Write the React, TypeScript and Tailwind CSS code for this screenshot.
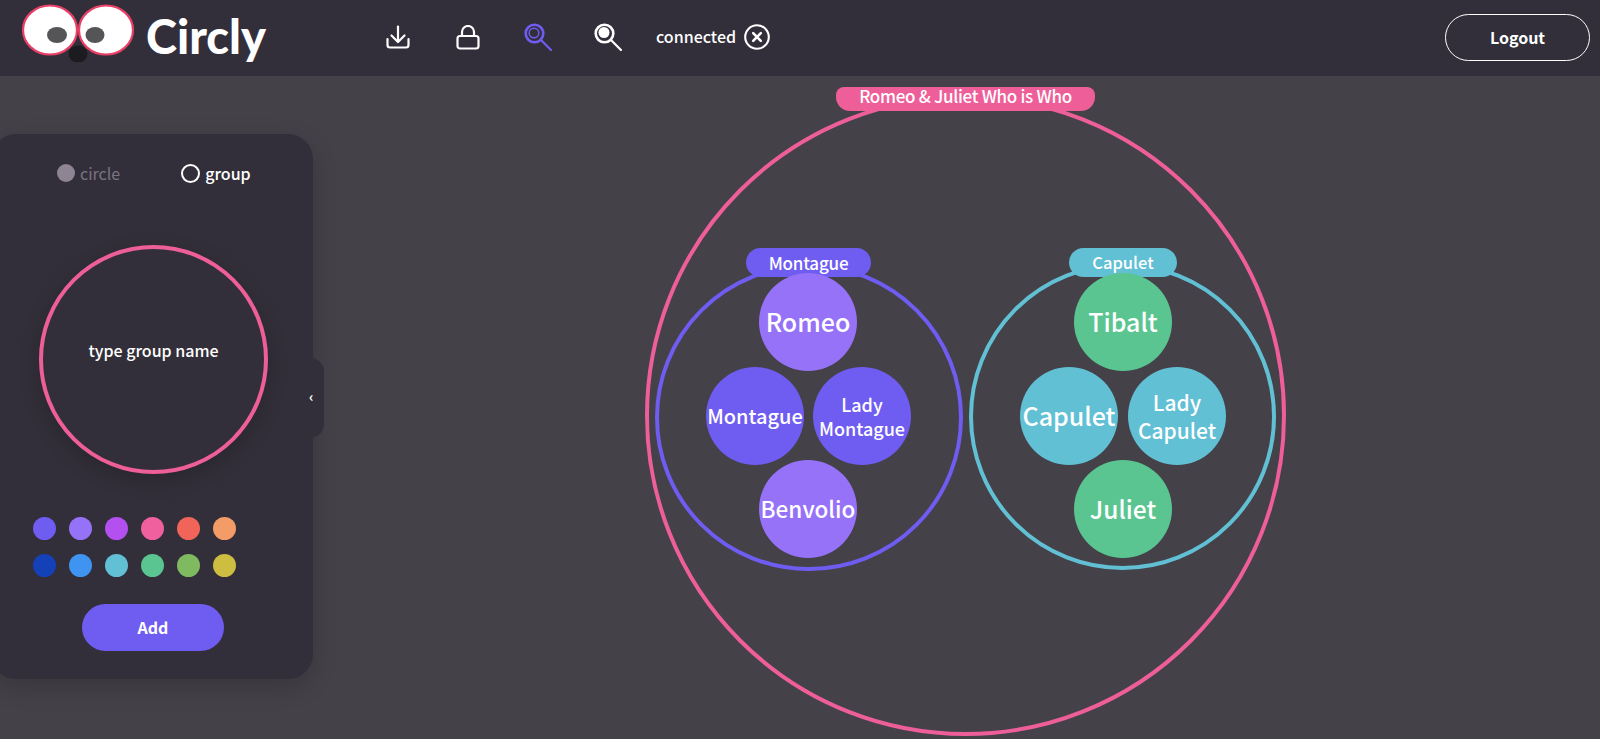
const font = "font-['Noto_Sans_CJK_JP','Noto_Sans',sans-serif]";

const swatches = [
  "bg-[#6f5cf1]", "bg-[#9672f8]", "bg-[#b44ff0]", "bg-[#f0609e]", "bg-[#f0645a]", "bg-[#f39c68]",
  "bg-[#1440b8]", "bg-[#3f94f2]", "bg-[#62c0d5]", "bg-[#5bc591]", "bg-[#7fb960]", "bg-[#cdbd40]",
];

const Logo = () => (
  <svg width="114" height="58" viewBox="0 0 114 58" className="-mt-[8px] shrink-0">
    <ellipse cx="57" cy="50" rx="9.5" ry="8.5" fill="#1b1b20" />
    <ellipse cx="29" cy="26" rx="27" ry="24.5" fill="#fff" stroke="#ea3f66" strokeWidth="2.2" />
    <ellipse cx="85" cy="26" rx="27" ry="24.5" fill="#fff" stroke="#ea3f66" strokeWidth="2.2" />
    <ellipse cx="36" cy="31" rx="10" ry="8" fill="#555457" />
    <ellipse cx="74" cy="31" rx="9.5" ry="8" fill="#555457" />
  </svg>
);

const DownloadIcon = () => (
  <svg width="24" height="24" viewBox="0 0 24 24" fill="none" stroke="#fff" strokeWidth="2.2" strokeLinecap="round" strokeLinejoin="round" className="shrink-0">
    <path d="M1.5 14v6a2.5 2.5 0 0 0 2.5 2.5h16a2.5 2.5 0 0 0 2.5-2.5v-6" />
    <path d="M12 1.5V16.5" />
    <path d="M5.5 10.5L12 17l6.5-6.5" />
  </svg>
);

const LockIcon = () => (
  <svg width="24" height="25" viewBox="0 0 24 25" fill="none" stroke="#fff" strokeWidth="2.2" strokeLinecap="round" strokeLinejoin="round" className="shrink-0">
    <rect x="1.5" y="11" width="21" height="12.5" rx="2.5" />
    <path d="M6 11V7a6 6 0 0 1 12 0v4" />
  </svg>
);

const SearchPurple = () => (
  <svg width="28" height="28" viewBox="0 0 28 28" fill="none" stroke="#6f5cf1" strokeLinecap="round" className="shrink-0">
    <circle cx="10.5" cy="10.5" r="8.8" strokeWidth="2.6" />
    <circle cx="10" cy="10" r="4.8" strokeWidth="1.5" />
    <path d="M17.5 17.5L27 27" strokeWidth="2.2" />
  </svg>
);

const SearchWhite = () => (
  <svg width="28" height="28" viewBox="0 0 28 28" fill="none" stroke="#fff" strokeLinecap="round" className="shrink-0">
    <circle cx="10.5" cy="10.5" r="8.8" strokeWidth="2.6" />
    <circle cx="10" cy="9.5" r="5.5" fill="#fff" stroke="none" />
    <path d="M17.5 17.5L27 27" strokeWidth="2.2" />
  </svg>
);

const CloseCircle = () => (
  <svg width="26" height="26" viewBox="0 0 26 26" fill="none" stroke="#fff" strokeLinecap="round" className="shrink-0">
    <circle cx="13" cy="13" r="11.8" strokeWidth="2.1" />
    <path d="M9.2 9.2l7.6 7.6M16.8 9.2l-7.6 7.6" strokeWidth="2.6" />
  </svg>
);

const Header = () => (
  <header className="flex h-[76px] shrink-0 items-center bg-[#322f3b] pb-[2px] pl-[21px] pr-[10px] text-white">
    <div className="flex w-[365px] items-center gap-[11px]">
      <Logo />
      <span className="font-['Lato',sans-serif] text-[47px] font-black leading-none -mt-[2px]">Circly</span>
    </div>
    <DownloadIcon />
    <div className="ml-[46px]"><LockIcon /></div>
    <div className="ml-[44px]"><SearchPurple /></div>
    <div className="ml-[42px]"><SearchWhite /></div>
    <span className="ml-[34px] -mt-[3px] text-[16px] font-medium">connected</span>
    <div className="ml-[8px]"><CloseCircle /></div>
    <button className="ml-auto flex h-[47px] w-[145px] items-center justify-center rounded-full border-[1.5px] border-white text-[16px] font-semibold">
      Logout
    </button>
  </header>
);

const Panel = () => (
  <aside className="relative ml-[-9px] mt-[58px] flex h-[545px] w-[322px] shrink-0 flex-col rounded-[25px] bg-[#322f3a] pl-[41px] shadow-[0_8px_24px_rgba(0,0,0,0.18)]">
    <div className="mt-[29px] flex h-[20px] items-center text-[16px]">
      <span className="ml-[25px] h-[18px] w-[18px] rounded-full bg-[#8e8494]" />
      <span className="ml-[5px] text-[#7b7382]">circle</span>
      <span className="ml-[61px] h-[19px] w-[19px] rounded-full border-[2.5px] border-white" />
      <span className="ml-[5px] font-medium text-white">group</span>
    </div>
    <div className="ml-[7px] mt-[62px] flex h-[229px] w-[229px] justify-center rounded-full border-[4px] border-[#ee5e99] pt-[89px] text-[16px] font-medium text-white shadow-[0_6px_20px_rgba(0,0,0,0.2)]">
      type group name
    </div>
    <div className="ml-[1px] mt-[43px] grid w-[203px] grid-cols-6 gap-x-[13px] gap-y-[13.5px]">
      {swatches.map((c) => (
        <span key={c} className={`h-[23px] w-[23px] rounded-full ${c}`} />
      ))}
    </div>
    <button className="ml-[50px] mt-[27px] h-[47px] w-[142px] rounded-full bg-[#6f5cf1] text-[16px] font-semibold text-white">
      Add
    </button>
    {/* collapse handle */}
    <div className="absolute left-[309px] top-[224px] flex h-[80px] w-[24px] items-center rounded-r-[14px] bg-[#322f3a] pl-[9px] text-[14px] font-semibold text-white">
      <span className="mt-[-4px]">‹</span>
    </div>
  </aside>
);

const Node = ({ className, children }: { className: string; children: React.ReactNode }) => (
  <div className={`absolute flex h-[98px] w-[98px] items-center justify-center rounded-full text-center font-medium text-white ${className}`}>
    {children}
  </div>
);

const Diagram = () => (
  <div className="relative min-w-0 flex-1">
    {/* outer group */}
    <div className="absolute left-[332px] top-[19px] h-[641px] w-[641px] rounded-full border-[4px] border-[#ee5e99]">
      <div className="absolute left-[187px] top-[-12px] flex h-[24px] w-[259px] items-center justify-center rounded-b-[14px] rounded-t-[8px] bg-[#ee5e99] pb-[6px] text-[17px] font-medium leading-[18px] tracking-[-0.3px] text-white">
        Romeo &amp; Juliet Who is Who
      </div>

      {/* Montague */}
      <div className="absolute left-[6px] top-[165px] h-[307px] w-[308px] rounded-full border-[4px] border-[#6f5cf1]">
        <div className="absolute left-[87px] top-[-20px] flex h-[29px] w-[125px] items-center justify-center rounded-full bg-[#6f5cf1] text-[17px] font-medium tracking-[-0.2px] text-white">
          Montague
        </div>
        <Node className="left-[100px] top-[5px] bg-[#9672f8] text-[25px]">Romeo</Node>
        <Node className="left-[47px] top-[99px] bg-[#6f5cf1] text-[20px]">Montague</Node>
        <Node className="left-[154px] top-[99px] bg-[#6f5cf1] text-[18px] leading-[24px]">Lady<br />Montague</Node>
        <Node className="left-[100px] top-[192px] bg-[#9672f8] text-[22.5px]">Benvolio</Node>
      </div>

      {/* Capulet */}
      <div className="absolute left-[320px] top-[164px] h-[307px] w-[307px] rounded-full border-[4px] border-[#62c0d5]">
        <div className="absolute left-[96px] top-[-19px] flex h-[29px] w-[108px] items-center justify-center rounded-full bg-[#62c0d5] text-[16.5px] font-medium text-white">
          Capulet
        </div>
        <Node className="left-[101px] top-[6px] bg-[#5bc591] text-[25px]">Tibalt</Node>
        <Node className="left-[47px] top-[100px] bg-[#62c0d5] text-[25px]">Capulet</Node>
        <Node className="left-[155px] top-[100px] bg-[#62c0d5] text-[21px] leading-[28px]">Lady<br />Capulet</Node>
        <Node className="left-[101px] top-[193px] bg-[#5bc591] text-[24.5px]">Juliet</Node>
      </div>
    </div>
  </div>
);

export default function App() {
  return (
    <div className={`flex h-screen flex-col overflow-hidden bg-[#444148] ${font}`}>
      <Header />
      <main className="flex min-h-0 flex-1">
        <Panel />
        <Diagram />
      </main>
    </div>
  );
}
